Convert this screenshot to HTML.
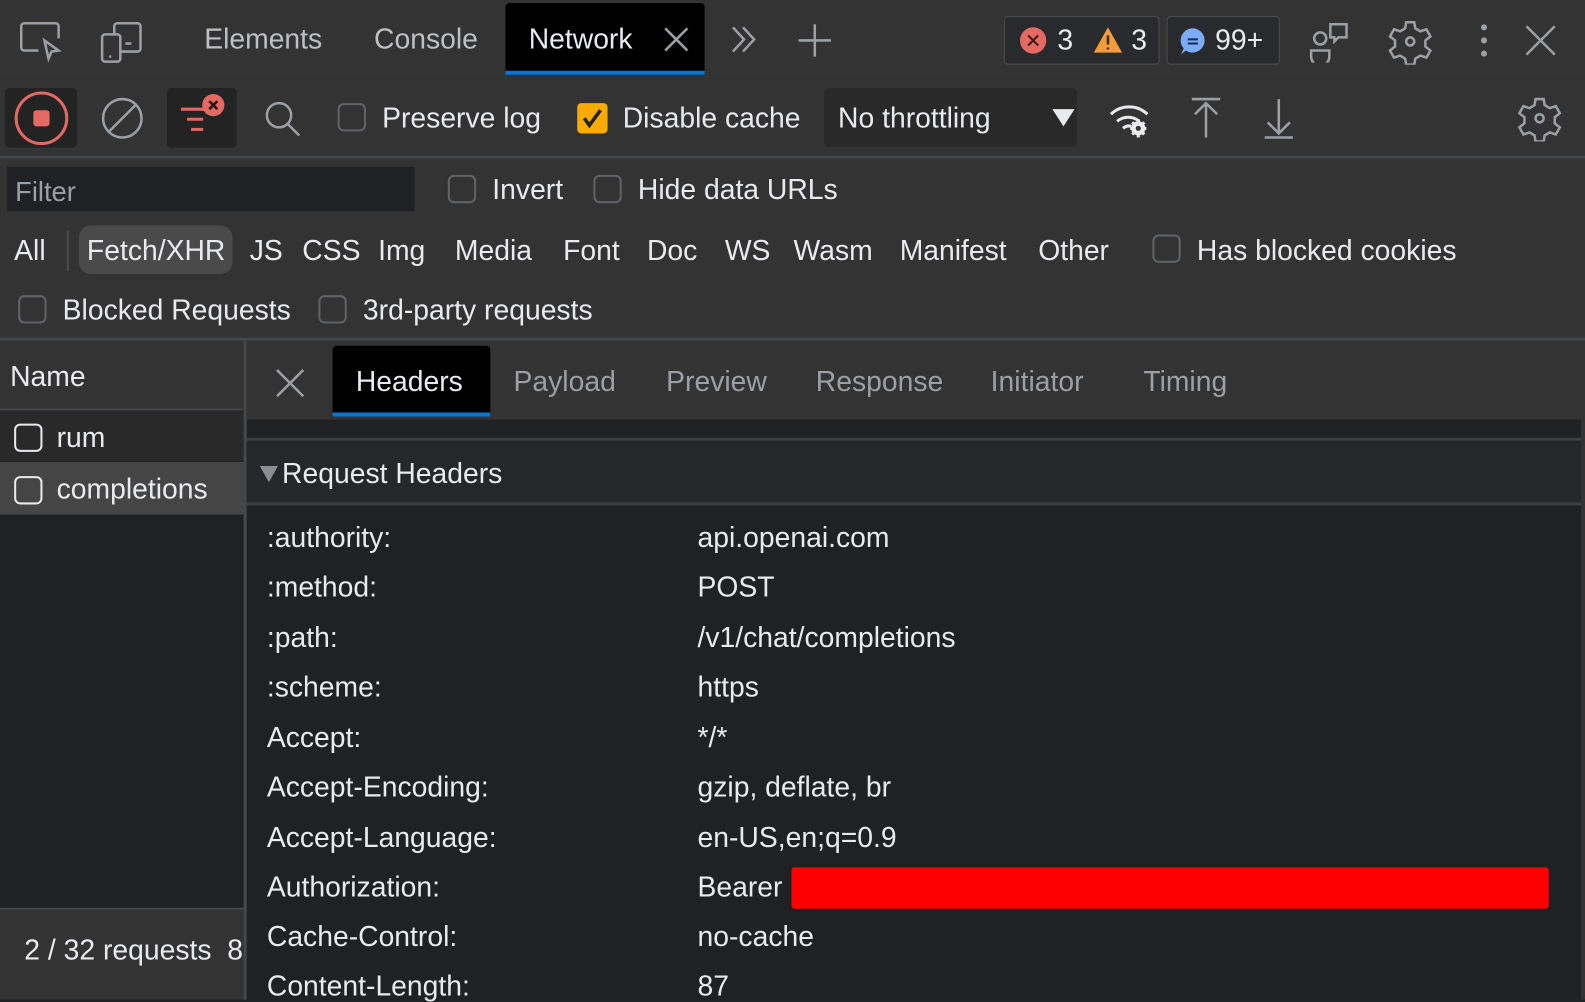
<!DOCTYPE html>
<html><head><meta charset="utf-8"><style>
*{box-sizing:border-box;margin:0;padding:0}
body{width:1585px;height:989px;overflow:hidden;background:#202124;font-family:"Liberation Sans",sans-serif;color:#e8eaed;position:relative}
#w{position:absolute;left:0;top:0;width:1568px;height:979px;transform:scale(1.0109);transform-origin:0 0}
.a{position:absolute}
.t{position:absolute;white-space:nowrap;line-height:1}
.cb{position:absolute;width:28px;height:28px;border:2px solid #5f6368;border-radius:6px}
.g{stroke:#9aa0a6;fill:none;stroke-width:2.5}
</style></head><body><div id="w">
<!-- top bar -->
<div class="a" style="left:0;top:0;width:1585px;height:78px;background:#333333"></div>
<svg class="a" style="left:18px;top:20px" width="46" height="42"><path class="g" d="M20 30H6a3 3 0 0 1-3-3V6a3 3 0 0 1 3-3h31a3 3 0 0 1 3 3v12"/><path class="g" d="M26 20l4 18 3-7 7-1z"/></svg>
<svg class="a" style="left:98px;top:20px" width="46" height="44"><rect class="g" x="15" y="3" width="26" height="28" rx="3"/><rect class="g" x="3" y="14" width="18" height="27" rx="3" style="fill:#333"/><path class="g" d="M10 36h2M26 23h6"/></svg>
<div class="t" style="left:202px;top:25px;font-size:28px;color:#bdc1c6">Elements</div>
<div class="t" style="left:370px;top:25px;font-size:28px;color:#bdc1c6">Console</div>
<div class="a" style="left:500px;top:3px;width:197px;height:71px;background:#000;border-radius:4px 4px 0 0"></div>
<div class="a" style="left:500px;top:70px;width:197px;height:4px;background:#0a74d0"></div>
<div class="t" style="left:523px;top:25px;font-size:28px;color:#e8eaed">Network</div>
<svg class="a" style="left:656px;top:26px" width="26" height="26"><path class="g" d="M2 2l22 22M24 2L2 24"/></svg>
<svg class="a" style="left:722px;top:24px" width="30" height="30"><path class="g" d="M3 3l11 12-11 12M13 3l11 12-11 12"/></svg>
<svg class="a" style="left:788px;top:22px" width="36" height="36"><path class="g" d="M18 2v32M2 18h32"/></svg>
<div class="a" style="left:993px;top:16px;width:154px;height:48px;border:1.5px solid #4a4c50;border-radius:4px;background:#292a2d"></div>
<div class="a" style="left:1009px;top:27px;width:26px;height:26px;border-radius:50%;background:#e46962"></div>
<svg class="a" style="left:1015px;top:33px" width="14" height="14"><path d="M2 2l10 10M12 2L2 12" stroke="#3a1a1a" stroke-width="2"/></svg>
<div class="t" style="left:1046px;top:26px;font-size:28px">3</div>
<svg class="a" style="left:1081px;top:25px" width="30" height="28"><path d="M15 2L29 27H1z" fill="#f29d38"/><path d="M15 10v9M15 22v2" stroke="#3a2a10" stroke-width="2.5"/></svg>
<div class="t" style="left:1119px;top:26px;font-size:28px">3</div>
<div class="a" style="left:1154px;top:16px;width:112px;height:48px;border:1.5px solid #4a4c50;border-radius:4px;background:#292a2d"></div>
<svg class="a" style="left:1166px;top:27px" width="28" height="28"><path d="M14 1a12 12 0 1 1-7 22L2 27l3-6A12 12 0 0 1 14 1z" fill="#7cacf8"/><path d="M9 12h10M9 16h10" stroke="#1a2a4a" stroke-width="2"/></svg>
<div class="t" style="left:1202px;top:26px;font-size:28px">99+</div>
<svg class="a" style="left:1294px;top:20px" width="44" height="42"><circle class="g" cx="12" cy="18" r="6"/><path class="g" d="M3 36v-6h18v6a9 9 0 0 1-18 0z"/><path class="g" d="M22 4h16v13h-8l-4 4v-4h-4z"/></svg>
<svg class="a" style="left:1372px;top:18px" width="46" height="46"><path class="g" d="M19 4h8l1 6 5 3 6-2 4 7-5 4v6l5 4-4 7-6-2-5 3-1 6h-8l-1-6-5-3-6 2-4-7 5-4v-6l-5-4 4-7 6 2 5-3z"/><circle class="g" cx="23" cy="23" r="4"/></svg>
<svg class="a" style="left:1462px;top:22px" width="12" height="36"><circle cx="6" cy="5" r="3" fill="#9aa0a6"/><circle cx="6" cy="18" r="3" fill="#9aa0a6"/><circle cx="6" cy="31" r="3" fill="#9aa0a6"/></svg>
<svg class="a" style="left:1508px;top:24px" width="32" height="32"><path class="g" d="M2 2l28 28M30 2L2 30"/></svg>
<!-- toolbar -->
<div class="a" style="left:0;top:78px;width:1585px;height:76px;background:#333333"></div>
<div class="a" style="left:0;top:154px;width:1585px;height:3px;background:#45474b"></div>
<div class="a" style="left:5px;top:87px;width:71px;height:59px;background:#232323;border-radius:4px"></div>
<svg class="a" style="left:14px;top:90px" width="54" height="54"><circle cx="27" cy="27" r="25" stroke="#e46962" stroke-width="3" fill="none"/><rect x="19" y="19" width="16" height="16" rx="3" fill="#e46962"/></svg>
<svg class="a" style="left:98px;top:94px" width="46" height="46"><circle class="g" cx="23" cy="23" r="19"/><path class="g" d="M36 10L10 36"/></svg>
<div class="a" style="left:165px;top:87px;width:69px;height:59px;background:#232323;border-radius:4px"></div>
<svg class="a" style="left:175px;top:92px" width="50" height="44"><path d="M4 16h24M10 26h16M14 36h12" stroke="#e46962" stroke-width="3"/><circle cx="36" cy="12" r="11" fill="#e46962"/><path d="M32 8l8 8M40 8l-8 8" stroke="#2a1010" stroke-width="2.5"/></svg>
<svg class="a" style="left:260px;top:98px" width="40" height="40"><circle class="g" cx="16" cy="16" r="12"/><path class="g" d="M25 25l11 11"/></svg>
<div class="cb" style="left:334px;top:102px"></div>
<div class="t" style="left:378px;top:103px;font-size:28px">Preserve log</div>
<div class="a" style="left:571px;top:102px;width:30px;height:30px;background:#f9ab00;border-radius:4px"></div>
<svg class="a" style="left:573px;top:104px" width="26" height="26"><path d="M5 13l5 7 11-15" stroke="#202124" stroke-width="3.5" fill="none"/></svg>
<div class="t" style="left:616px;top:103px;font-size:28px">Disable cache</div>
<div class="a" style="left:815px;top:87px;width:250px;height:58px;background:#292929;border-radius:4px"></div>
<div class="t" style="left:829px;top:103px;font-size:28px">No throttling</div>
<svg class="a" style="left:1040px;top:106px" width="24" height="20"><path d="M1 2h22L12 19z" fill="#e8eaed"/></svg>
<svg class="a" style="left:1096px;top:99px" width="44" height="40"><path d="M3 14a26 26 0 0 1 36 0M9 21a17 17 0 0 1 22 0M15 28a8 8 0 0 1 8-2" stroke="#e8eaed" stroke-width="3" fill="none"/><circle cx="30" cy="28" r="7" fill="#e8eaed"/><path d="M30 19v18M22 28h16M24 22l12 12M36 22L24 34" stroke="#e8eaed" stroke-width="3"/><circle cx="30" cy="28" r="2.5" fill="#333"/></svg>
<svg class="a" style="left:1176px;top:96px" width="34" height="42"><path class="g" d="M3 2h28M17 6v34M6 17l11-11 11 11"/></svg>
<svg class="a" style="left:1248px;top:96px" width="34" height="42"><path class="g" d="M3 40h28M17 2v34M6 25l11 11 11-11"/></svg>
<svg class="a" style="left:1500px;top:94px" width="46" height="46"><path class="g" d="M19 4h8l1 6 5 3 6-2 4 7-5 4v6l5 4-4 7-6-2-5 3-1 6h-8l-1-6-5-3-6 2-4-7 5-4v-6l-5-4 4-7 6 2 5-3z"/><circle class="g" cx="23" cy="23" r="4"/></svg>
<!-- filter area -->
<div class="a" style="left:0;top:157px;width:1585px;height:177px;background:#333333"></div>
<div class="a" style="left:0;top:334px;width:1585px;height:3px;background:#45474b"></div>
<div class="a" style="left:7px;top:165px;width:403px;height:44px;background:#202124"></div>
<div class="t" style="left:15px;top:177px;font-size:27px;color:#9aa0a6">Filter</div>
<div class="cb" style="left:443px;top:173px"></div>
<div class="t" style="left:487px;top:174px;font-size:28px">Invert</div>
<div class="cb" style="left:587px;top:173px"></div>
<div class="t" style="left:631px;top:174px;font-size:28px">Hide data URLs</div>
<div class="t" style="left:14px;top:234px;font-size:28px">All</div>
<div class="a" style="left:66px;top:228px;width:2px;height:40px;background:#4a4c50"></div>
<div class="a" style="left:78px;top:223px;width:152px;height:48px;background:#4a4a4a;border-radius:12px"></div>
<div class="t" style="left:86px;top:234px;font-size:28px">Fetch/XHR</div>
<div class="t" style="left:247px;top:234px;font-size:28px">JS</div>
<div class="t" style="left:299px;top:234px;font-size:28px">CSS</div>
<div class="t" style="left:374px;top:234px;font-size:28px">Img</div>
<div class="t" style="left:450px;top:234px;font-size:28px">Media</div>
<div class="t" style="left:557px;top:234px;font-size:28px">Font</div>
<div class="t" style="left:640px;top:234px;font-size:28px">Doc</div>
<div class="t" style="left:717px;top:234px;font-size:28px">WS</div>
<div class="t" style="left:785px;top:234px;font-size:28px">Wasm</div>
<div class="t" style="left:890px;top:234px;font-size:28px">Manifest</div>
<div class="t" style="left:1027px;top:234px;font-size:28px">Other</div>
<div class="cb" style="left:1140px;top:232px"></div>
<div class="t" style="left:1184px;top:234px;font-size:28px">Has blocked cookies</div>
<div class="cb" style="left:18px;top:292px"></div>
<div class="t" style="left:62px;top:293px;font-size:28px">Blocked Requests</div>
<div class="cb" style="left:315px;top:292px"></div>
<div class="t" style="left:359px;top:293px;font-size:28px">3rd-party requests</div>
<!-- left panel -->
<div class="a" style="left:0;top:337px;width:241px;height:67px;background:#333333"></div>
<div class="t" style="left:10px;top:359px;font-size:28px">Name</div>
<div class="a" style="left:0;top:404px;width:241px;height:2px;background:#45474b"></div>
<div class="a" style="left:0;top:406px;width:241px;height:50px;background:#292929"></div>
<div class="cb" style="left:14px;top:419px;border-color:#e8eaed"></div>
<div class="t" style="left:56px;top:419px;font-size:28px">rum</div>
<div class="a" style="left:0;top:457px;width:241px;height:52px;background:#454545"></div>
<div class="cb" style="left:14px;top:471px;border-color:#e8eaed"></div>
<div class="t" style="left:56px;top:470px;font-size:28px">completions</div>
<div class="a" style="left:0;top:898px;width:241px;height:2px;background:#45474b"></div>
<div class="a" style="left:0;top:900px;width:241px;height:89px;background:#333333"></div>
<div class="t" style="left:24px;top:926px;font-size:28px">2 / 32 requests &nbsp;8</div>
<div class="a" style="left:241px;top:337px;width:3px;height:652px;background:#45474b"></div>
<!-- right panel -->
<div class="a" style="left:244px;top:337px;width:1341px;height:78px;background:#333333"></div>
<svg class="a" style="left:272px;top:364px" width="30" height="30"><path class="g" d="M2 2l26 26M28 2L2 28"/></svg>
<div class="a" style="left:329px;top:342px;width:156px;height:70px;background:#000;border-radius:4px 4px 0 0"></div>
<div class="a" style="left:329px;top:408px;width:156px;height:4px;background:#0a74d0"></div>
<div class="t" style="left:352px;top:364px;font-size:28px">Headers</div>
<div class="t" style="left:508px;top:364px;font-size:28px;color:#9aa0a6">Payload</div>
<div class="t" style="left:659px;top:364px;font-size:28px;color:#9aa0a6">Preview</div>
<div class="t" style="left:807px;top:364px;font-size:28px;color:#9aa0a6">Response</div>
<div class="t" style="left:980px;top:364px;font-size:28px;color:#9aa0a6">Initiator</div>
<div class="t" style="left:1131px;top:364px;font-size:28px;color:#9aa0a6">Timing</div>
<div class="a" style="left:244px;top:433px;width:1320px;height:3px;background:#3c3e42"></div>
<div class="a" style="left:244px;top:436px;width:1320px;height:62px;background:#26272a"></div>
<div class="a" style="left:244px;top:497px;width:1320px;height:3px;background:#3c3e42"></div>
<div class="a" style="left:1564px;top:415px;width:4px;height:574px;background:#333"></div>
<svg class="a" style="left:256px;top:460px" width="20" height="18"><path d="M1 1h18L10 17z" fill="#8a8d91"/></svg>
<div class="t" style="left:279px;top:455px;font-size:28px">Request Headers</div>
<div class="t" style="left:264px;top:518px;font-size:28px">:authority:</div><div class="t" style="left:690px;top:518px;font-size:28px">api.openai.com</div>
<div class="t" style="left:264px;top:567px;font-size:28px">:method:</div><div class="t" style="left:690px;top:567px;font-size:28px">POST</div>
<div class="t" style="left:264px;top:617px;font-size:28px">:path:</div><div class="t" style="left:690px;top:617px;font-size:28px">/v1/chat/completions</div>
<div class="t" style="left:264px;top:666px;font-size:28px">:scheme:</div><div class="t" style="left:690px;top:666px;font-size:28px">https</div>
<div class="t" style="left:264px;top:716px;font-size:28px">Accept:</div><div class="t" style="left:690px;top:716px;font-size:28px">*/*</div>
<div class="t" style="left:264px;top:765px;font-size:28px">Accept-Encoding:</div><div class="t" style="left:690px;top:765px;font-size:28px">gzip, deflate, br</div>
<div class="t" style="left:264px;top:815px;font-size:28px">Accept-Language:</div><div class="t" style="left:690px;top:815px;font-size:28px">en-US,en;q=0.9</div>
<div class="t" style="left:264px;top:864px;font-size:28px">Authorization:</div><div class="t" style="left:690px;top:864px;font-size:28px">Bearer</div>
<div class="a" style="left:783px;top:858px;width:749px;height:41px;background:#ff0000;border-radius:3px"></div>
<div class="t" style="left:264px;top:913px;font-size:28px">Cache-Control:</div><div class="t" style="left:690px;top:913px;font-size:28px">no-cache</div>
<div class="t" style="left:264px;top:962px;font-size:28px">Content-Length:</div><div class="t" style="left:690px;top:962px;font-size:28px">87</div>
</div></body></html>
